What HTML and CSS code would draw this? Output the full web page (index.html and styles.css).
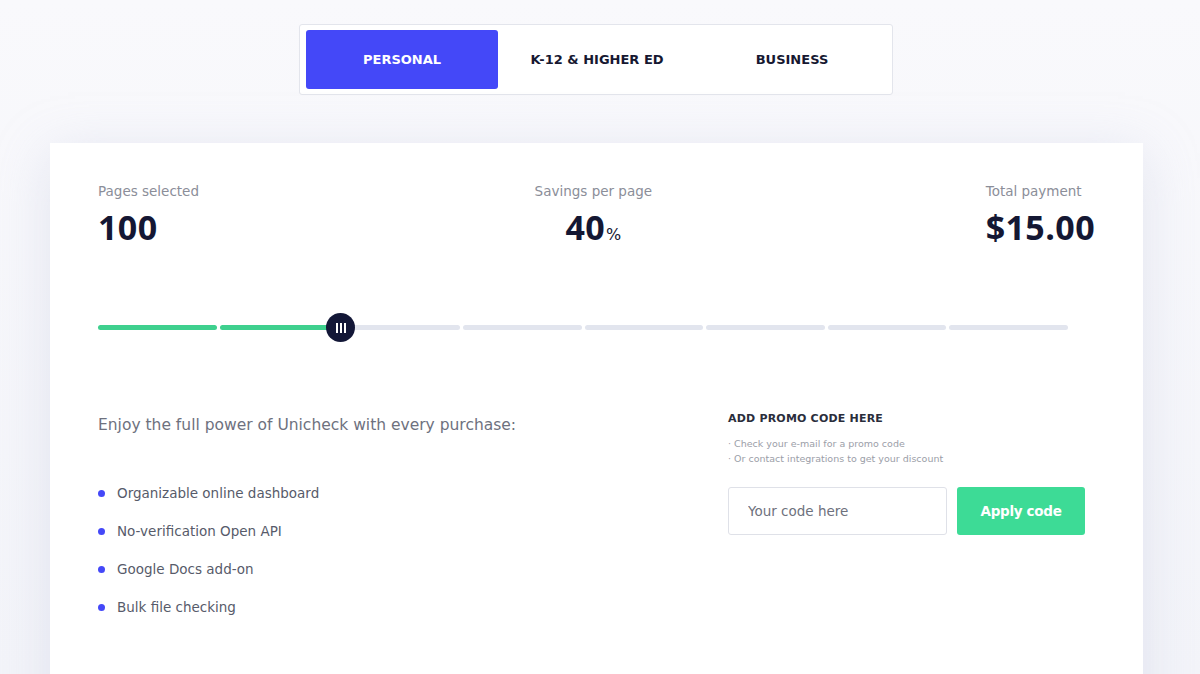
FILE: index.html
```html
<!DOCTYPE html>
<html>
<head>
<meta charset="utf-8">
<link rel="stylesheet" href="styles.css">
</head>
<body>
<div class="page">
  <nav class="tabs">
    <button class="tab active">PERSONAL</button>
    <button class="tab">K-12 &amp; HIGHER ED</button>
    <button class="tab">BUSINESS</button>
  </nav>

  <section class="card">
    <div class="stats">
      <div class="stat left">
        <div class="label">Pages selected</div>
        <div class="value">100</div>
      </div>
      <div class="stat center">
        <div class="label">Savings per page</div>
        <div class="value">40<span class="pct">%</span></div>
      </div>
      <div class="stat right">
        <div class="label">Total payment</div>
        <div class="value">$15.00</div>
      </div>
    </div>

    <div class="slider">
      <div class="seg on"></div>
      <div class="seg on"></div>
      <div class="seg"></div>
      <div class="seg"></div>
      <div class="seg"></div>
      <div class="seg"></div>
      <div class="seg"></div>
      <div class="seg"></div>
      <div class="thumb"><span></span><span></span><span></span></div>
    </div>

    <div class="bottom">
      <div class="features">
        <p class="intro">Enjoy the full power of Unicheck with every purchase:</p>
        <ul class="list">
          <li>Organizable online dashboard</li>
          <li>No-verification Open API</li>
          <li>Google Docs add-on</li>
          <li>Bulk file checking</li>
        </ul>
      </div>
      <div class="promo">
        <h3 class="promo-title">ADD PROMO CODE HERE</h3>
        <p class="hint">· Check your e-mail for a promo code</p>
        <p class="hint">· Or contact integrations to get your discount</p>
        <div class="promo-form">
          <input class="code" type="text" placeholder="Your code here">
          <button class="apply">Apply code</button>
        </div>
      </div>
    </div>
  </section>
</div>
</body>
</html>
```

FILE: styles.css
```css
* { box-sizing: border-box; }
html, body { margin: 0; height: 100%; }
body {
  font-family: "DejaVu Sans", sans-serif;
  background: linear-gradient(180deg, #f9f9fc 0%, #f3f4f9 100%);
  overflow: hidden;
  color: #151833;
}
.page {
  display: flex;
  flex-direction: column;
  align-items: center;
  padding-top: 24px;
  padding-right: 8px;
}
.tabs {
  width: 594px;
  height: 71px;
  background: #fff;
  border: 1px solid #e3e5ec;
  border-radius: 3px;
  padding: 5px 6px;
  display: grid;
  grid-template-columns: 192px 194px 192px;
  gap: 2px;
}
.tab {
  border: 0;
  background: transparent;
  font-family: inherit;
  font-weight: bold;
  font-size: 13px;
  color: #161831;
  border-radius: 3px;
  cursor: pointer;
}
.tab.active {
  background: #4448f8;
  color: #fff;
}
.card {
  margin-top: 48px;
  width: 1093px;
  margin-left: 1px;
  height: 600px;
  background: #fff;
  box-shadow: 0 10px 50px rgba(190, 196, 220, 0.35);
  padding: 40px 49px 0 48px;
}
.stats {
  display: flex;
  justify-content: space-between;
}
.stat { display: flex; flex-direction: column; }
.stat.center { align-items: center; margin-left: 2px; }
.stat.right { align-items: flex-start; margin-right: -1px; }
.label {
  font-size: 13.5px;
  color: #8b8e99;
  line-height: 16px;
}
.value {
  margin-top: 8px;
  font-family: "Open Sans", sans-serif;
  font-size: 34px;
  font-weight: 700;
  line-height: 40px;
  height: 40px;
  color: #141733;
  letter-spacing: 0.4px;
}
.pct {
  font-family: "DejaVu Sans", sans-serif;
  font-size: 16px;
  font-weight: normal;
  letter-spacing: 0;
  line-height: 1;
  margin-left: 1px;
}
.slider {
  position: relative;
  margin-top: 78px;
  width: 970px;
  display: grid;
  grid-template-columns: repeat(8, 1fr);
  gap: 3px;
}
.seg {
  height: 5px;
  border-radius: 3px;
  background: #e2e5ee;
}
.seg.on { background: #3ed08e; }
.thumb {
  position: absolute;
  left: 228px;
  top: -12px;
  width: 29px;
  height: 29px;
  border-radius: 50%;
  background: #131737;
  display: flex;
  align-items: center;
  justify-content: center;
  gap: 2px;
}
.thumb span {
  width: 2px;
  height: 10px;
  background: #fff;
}
.bottom {
  margin-top: 74px;
  display: flex;
  justify-content: space-between;
}
.intro {
  margin: 11px 0 0;
  font-size: 15.5px;
  color: #6e717e;
  line-height: 20px;
}
.list {
  list-style: none;
  margin: 49px 0 0;
  padding: 0;
}
.list li {
  position: relative;
  padding-left: 19px;
  font-size: 13.5px;
  color: #575b6a;
  line-height: 18px;
  margin-bottom: 20px;
}
.list li::before {
  content: "";
  position: absolute;
  left: 0;
  top: 6px;
  width: 7px;
  height: 7px;
  border-radius: 50%;
  background: #4448f8;
}
.promo {
  width: 357px;
  margin-right: 9px;
  padding-top: 8px;
}
.promo-title {
  margin: 0 0 10px;
  font-size: 11px;
  font-weight: 600;
  color: #2a2d3b;
  line-height: 14px;
  letter-spacing: 0.2px;
}
.hint {
  margin: 0;
  font-size: 9.5px;
  color: #9b9ea8;
  line-height: 15px;
}
.promo-form {
  margin-top: 21px;
  display: flex;
  gap: 10px;
}
.code {
  width: 219px;
  height: 48px;
  border: 1px solid #dfe1e8;
  border-radius: 3px;
  padding: 0 19px;
  font-family: inherit;
  font-size: 13.5px;
  outline: none;
}
.code::placeholder { color: #6e717d; }
.apply {
  width: 128px;
  height: 48px;
  border: 0;
  border-radius: 3px;
  background: #3ddb96;
  color: #fff;
  font-family: inherit;
  font-weight: bold;
  font-size: 13.5px;
  letter-spacing: -0.3px;
}
```
